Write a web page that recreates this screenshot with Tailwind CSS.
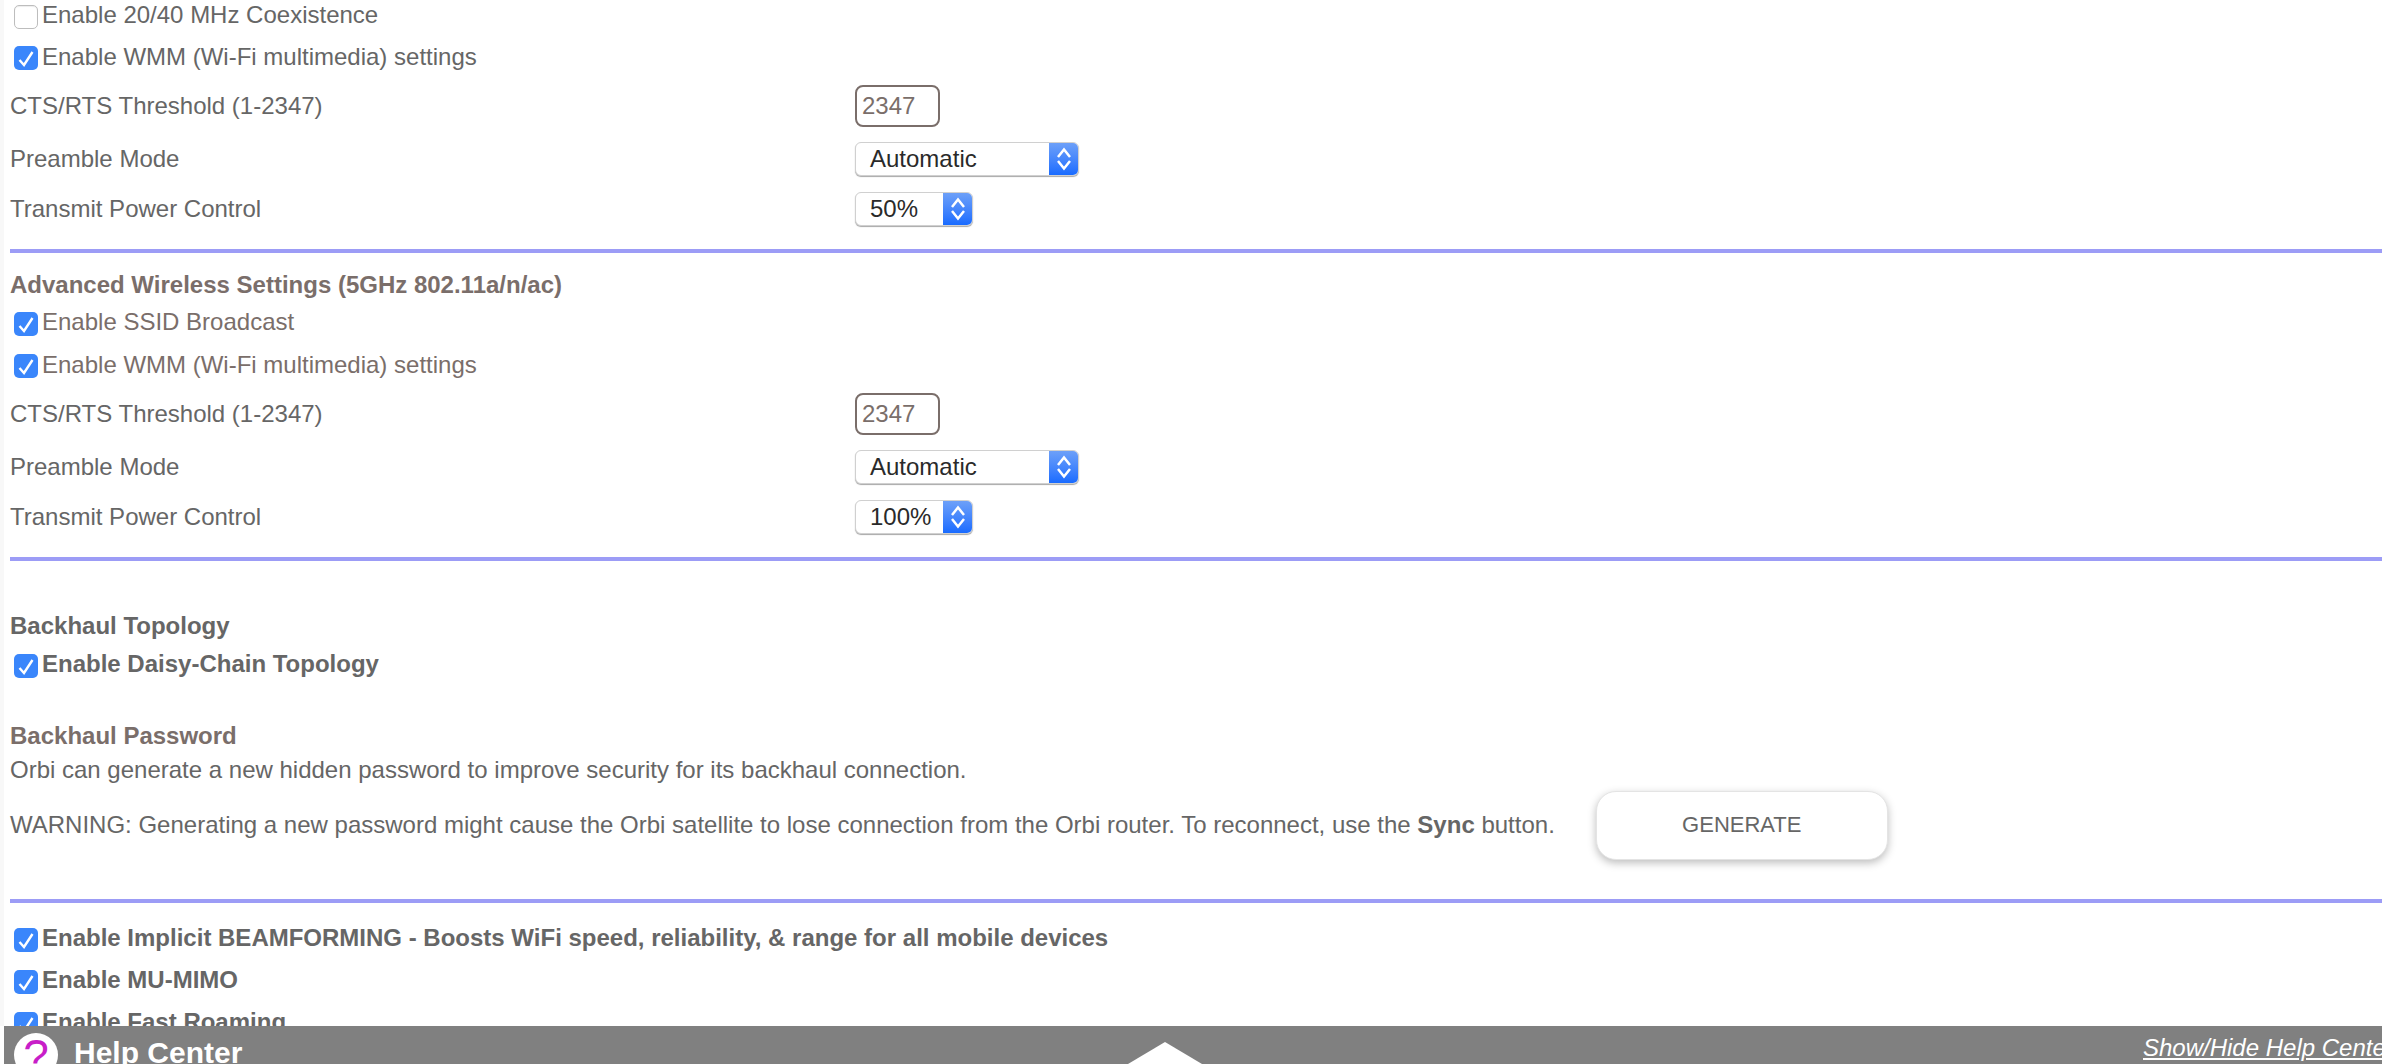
<!DOCTYPE html>
<html lang="en">
  <head>
    <meta charset="UTF-8" />
    <title>Advanced Wireless Settings</title>
    <script src="https://cdn.jsdelivr.net/npm/@tailwindcss/browser@4"></script>
  </head>
  <body class="bg-white h-screen overflow-hidden flex flex-col font-['Liberation_Sans',Arial,sans-serif] text-[24px] text-[#666666]">
    <!-- Settings -->
    <main class="h-[1026px] overflow-hidden pl-[6px] pt-[5px] border-l-[4px] border-[#f8f8f8] flex flex-col">
      <div class="flex items-center h-[24px] shrink-0">
        <span class="ml-[4px] w-[24px] h-[24px] rounded-[5px] bg-white border border-[#bdbdbd] shadow-[inset_0_1px_1px_#ededed] shrink-0"></span>
        <span class="ml-[4px] pb-[4px]">Enable 20/40 MHz Coexistence</span>
      </div>
      <div class="flex items-center h-[24px] shrink-0 mt-[17px]">
        <span class="ml-[4px] w-[24px] h-[24px] rounded-[5px] bg-[#3a86fb] flex items-center justify-center shrink-0">
          <svg width="24" height="24" viewBox="0 0 24 24" fill="none" stroke="white" stroke-width="2.4"><path d="M5.5 14 10 19 18.5 6" /></svg>
        </span>
        <span class="ml-[4px] pb-[3px]">Enable WMM (Wi-Fi multimedia) settings</span>
      </div>
      <div class="flex items-center h-[42px] shrink-0 mt-[15px]">
        <span class="w-[845px]">CTS/RTS Threshold (1-2347)</span>
        <div class="w-[85px] h-[42px] rounded-[8px] border-[2px] border-[#7a6e6a] text-[#7a6e6a] pl-[5px] flex items-center">2347</div>
      </div>
      <div class="flex items-center h-[34px] shrink-0 mt-[15px]">
        <span class="w-[845px]">Preamble Mode</span>
        <div class="w-[224px] h-[34px] rounded-[6px] bg-white border border-[#d0d0d0] shadow-[0_1px_1px_#a8a8a8] flex items-center justify-between text-[#2a2a2a] pl-[14px] overflow-hidden">
          <span>Automatic</span>
          <span class="w-[29px] h-[34px] bg-gradient-to-b from-[#6fa1f8] to-[#1469ff] flex items-center justify-center shrink-0">
            <svg width="16" height="26" viewBox="0 0 16 26" fill="none" stroke="white" stroke-width="2.5"><path d="M2 11 8 3.5 14 11M2 15 8 22.5 14 15" /></svg>
          </span>
        </div>
      </div>
      <div class="flex items-center h-[34px] shrink-0 mt-[16px]">
        <span class="w-[845px]">Transmit Power Control</span>
        <div class="w-[118px] h-[34px] rounded-[6px] bg-white border border-[#d0d0d0] shadow-[0_1px_1px_#a8a8a8] flex items-center justify-between text-[#2a2a2a] pl-[14px] overflow-hidden">
          <span>50%</span>
          <span class="w-[29px] h-[34px] bg-gradient-to-b from-[#6fa1f8] to-[#1469ff] flex items-center justify-center shrink-0">
            <svg width="16" height="26" viewBox="0 0 16 26" fill="none" stroke="white" stroke-width="2.5"><path d="M2 11 8 3.5 14 11M2 15 8 22.5 14 15" /></svg>
          </span>
        </div>
      </div>
      <div class="h-[4px] bg-[#9c9cf6] shrink-0 mt-[23px]"></div>

      <h2 class="h-[28px] leading-[28px] font-bold text-[#7a6e6a] shrink-0 mt-[18px]">Advanced Wireless Settings (5GHz 802.11a/n/ac)</h2>
      <div class="flex items-center h-[24px] shrink-0 mt-[13px]">
        <span class="ml-[4px] w-[24px] h-[24px] rounded-[5px] bg-[#3a86fb] flex items-center justify-center shrink-0">
          <svg width="24" height="24" viewBox="0 0 24 24" fill="none" stroke="white" stroke-width="2.4"><path d="M5.5 14 10 19 18.5 6" /></svg>
        </span>
        <span class="ml-[4px] pb-[4px] text-[#7a6e6a]">Enable SSID Broadcast</span>
      </div>
      <div class="flex items-center h-[24px] shrink-0 mt-[18px]">
        <span class="ml-[4px] w-[24px] h-[24px] rounded-[5px] bg-[#3a86fb] flex items-center justify-center shrink-0">
          <svg width="24" height="24" viewBox="0 0 24 24" fill="none" stroke="white" stroke-width="2.4"><path d="M5.5 14 10 19 18.5 6" /></svg>
        </span>
        <span class="ml-[4px] pb-[3px] text-[#7a6e6a]">Enable WMM (Wi-Fi multimedia) settings</span>
      </div>
      <div class="flex items-center h-[42px] shrink-0 mt-[15px]">
        <span class="w-[845px]">CTS/RTS Threshold (1-2347)</span>
        <div class="w-[85px] h-[42px] rounded-[8px] border-[2px] border-[#7a6e6a] text-[#7a6e6a] pl-[5px] flex items-center">2347</div>
      </div>
      <div class="flex items-center h-[34px] shrink-0 mt-[15px]">
        <span class="w-[845px]">Preamble Mode</span>
        <div class="w-[224px] h-[34px] rounded-[6px] bg-white border border-[#d0d0d0] shadow-[0_1px_1px_#a8a8a8] flex items-center justify-between text-[#2a2a2a] pl-[14px] overflow-hidden">
          <span>Automatic</span>
          <span class="w-[29px] h-[34px] bg-gradient-to-b from-[#6fa1f8] to-[#1469ff] flex items-center justify-center shrink-0">
            <svg width="16" height="26" viewBox="0 0 16 26" fill="none" stroke="white" stroke-width="2.5"><path d="M2 11 8 3.5 14 11M2 15 8 22.5 14 15" /></svg>
          </span>
        </div>
      </div>
      <div class="flex items-center h-[34px] shrink-0 mt-[16px]">
        <span class="w-[845px]">Transmit Power Control</span>
        <div class="w-[118px] h-[34px] rounded-[6px] bg-white border border-[#d0d0d0] shadow-[0_1px_1px_#a8a8a8] flex items-center justify-between text-[#2a2a2a] pl-[14px] overflow-hidden">
          <span>100%</span>
          <span class="w-[29px] h-[34px] bg-gradient-to-b from-[#6fa1f8] to-[#1469ff] flex items-center justify-center shrink-0">
            <svg width="16" height="26" viewBox="0 0 16 26" fill="none" stroke="white" stroke-width="2.5"><path d="M2 11 8 3.5 14 11M2 15 8 22.5 14 15" /></svg>
          </span>
        </div>
      </div>
      <div class="h-[4px] bg-[#9c9cf6] shrink-0 mt-[23px]"></div>

      <h2 class="h-[28px] leading-[28px] font-bold shrink-0 mt-[51px]">Backhaul Topology</h2>
      <div class="flex items-center h-[24px] shrink-0 mt-[14px]">
        <span class="ml-[4px] w-[24px] h-[24px] rounded-[5px] bg-[#3a86fb] flex items-center justify-center shrink-0">
          <svg width="24" height="24" viewBox="0 0 24 24" fill="none" stroke="white" stroke-width="2.4"><path d="M5.5 14 10 19 18.5 6" /></svg>
        </span>
        <span class="ml-[4px] pb-[4px] font-bold">Enable Daisy-Chain Topology</span>
      </div>
      <h2 class="h-[28px] leading-[28px] font-bold text-[#7a6e6a] shrink-0 mt-[44px]">Backhaul Password</h2>
      <p class="h-[28px] leading-[28px] shrink-0 mt-[6px]">Orbi can generate a new hidden password to improve security for its backhaul connection.</p>
      <div class="flex items-center h-[69px] shrink-0 mt-[7px]">
        <p class="pb-[2px]">WARNING: Generating a new password might cause the Orbi satellite to lose connection from the Orbi router. To reconnect, use the <b>Sync</b> button.</p>
        <button class="ml-[41px] w-[292px] h-[69px] pb-[2px] rounded-[20px] bg-white border border-[#e4e4e4] shadow-[0_3px_8px_#bdbdbd] text-[22px] text-[#666666] shrink-0">GENERATE</button>
      </div>
      <div class="h-[4px] bg-[#9c9cf6] shrink-0 mt-[39px]"></div>

      <div class="flex items-center h-[24px] shrink-0 mt-[25px]">
        <span class="ml-[4px] w-[24px] h-[24px] rounded-[5px] bg-[#3a86fb] flex items-center justify-center shrink-0">
          <svg width="24" height="24" viewBox="0 0 24 24" fill="none" stroke="white" stroke-width="2.4"><path d="M5.5 14 10 19 18.5 6" /></svg>
        </span>
        <span class="ml-[4px] pb-[4px] font-bold">Enable Implicit BEAMFORMING - Boosts WiFi speed, reliability, &amp; range for all mobile devices</span>
      </div>
      <div class="flex items-center h-[24px] shrink-0 mt-[18px]">
        <span class="ml-[4px] w-[24px] h-[24px] rounded-[5px] bg-[#3a86fb] flex items-center justify-center shrink-0">
          <svg width="24" height="24" viewBox="0 0 24 24" fill="none" stroke="white" stroke-width="2.4"><path d="M5.5 14 10 19 18.5 6" /></svg>
        </span>
        <span class="ml-[4px] pb-[4px] font-bold">Enable MU-MIMO</span>
      </div>
      <div class="flex items-center h-[24px] shrink-0 mt-[18px]">
        <span class="ml-[4px] w-[24px] h-[24px] rounded-[5px] bg-[#3a86fb] flex items-center justify-center shrink-0">
          <svg width="24" height="24" viewBox="0 0 24 24" fill="none" stroke="white" stroke-width="2.4"><path d="M5.5 14 10 19 18.5 6" /></svg>
        </span>
        <span class="ml-[4px] pb-[4px] font-bold">Enable Fast Roaming</span>
      </div>
    </main>

    <!-- Help Center bar -->
    <footer class="relative h-[38px] ml-[4px] bg-[#808080] overflow-hidden shrink-0 text-white">
      <div class="flex items-start">
        <span class="ml-[10px] mt-[7px] w-[44px] h-[44px] rounded-full bg-white text-[#c81ec8] text-[46px] leading-[46px] text-center shrink-0">?</span>
        <span class="ml-[16px] mt-[7px] font-bold text-[30px] leading-[40px]">Help Center</span>
      </div>
      <div class="absolute left-[1124px] top-[16px] w-0 h-0 border-x-[37px] border-x-transparent border-b-[22px] border-b-white"></div>
      <a class="absolute left-[2139px] top-[8px] italic underline whitespace-nowrap leading-[28px]">Show/Hide Help Center</a>
    </footer>
  </body>
</html>
